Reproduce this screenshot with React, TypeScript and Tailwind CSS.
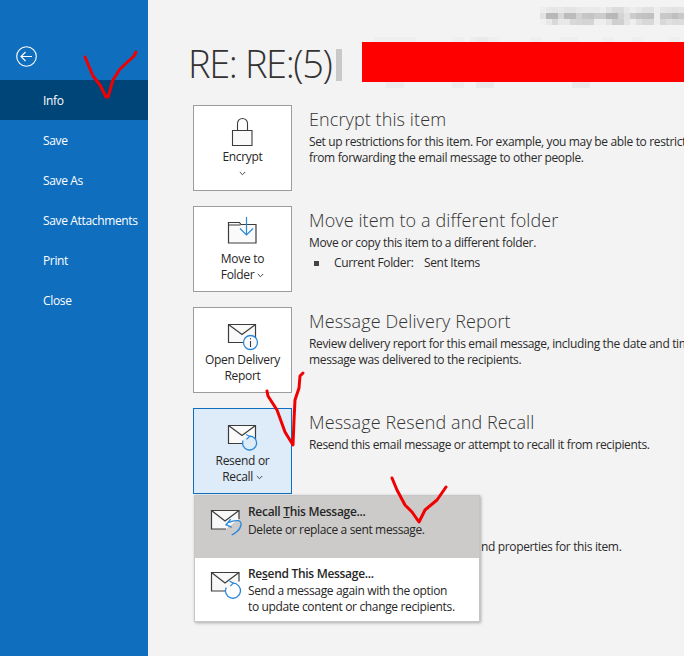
import React from "react";

const font = { fontFamily: '"Open Sans", "Noto Sans", sans-serif' };
const ink = "#3c3c3c";
const blue = "#2b88d8";

function Envelope() {
  return (
    <g fill="#fafafa" stroke={ink} strokeWidth="1.2">
      <path d="M6.5 5.5h27v18h-27z" />
      <path d="M6.5 5.5 20 15.5 33.5 5.5" fill="none" />
    </g>
  );
}

function LockIcon() {
  return (
    <svg width="41" height="32" viewBox="0 0 41 32" fill="none" className="overflow-visible">
      <path d="M15.5 13.5V6.5a5 5 0 0 1 10 0v7" stroke={ink} strokeWidth="1.1" />
      <path d="M10.5 13.5h19.5v15H10.5z" fill="#fafafa" stroke={ink} strokeWidth="1.1" />
    </svg>
  );
}

function FolderIcon() {
  return (
    <svg width="41" height="32" viewBox="0 0 41 32" fill="none" className="overflow-visible">
      <path d="M6.5 4.5h11l1.5 2h15v18.5h-27.5z" fill="#fafafa" stroke={ink} strokeWidth="1.2" />
      <path d="M6.5 7h12" stroke={ink} strokeWidth="1" />
      <path d="M24.5 -1v18M18 10.5l6.5 6.5 6.5-6.5" stroke={blue} strokeWidth="1.2" />
    </svg>
  );
}

function InfoEnvelope() {
  return (
    <svg width="41" height="32" viewBox="0 0 41 32" fill="none" className="overflow-visible">
      <Envelope />
      <circle cx="28.5" cy="23.5" r="7" fill="#fafafa" stroke={blue} strokeWidth="1.3" />
      <path d="M28.5 22v6" stroke={ink} strokeWidth="1.1" />
      <path d="M28.5 19.2v1.2" stroke={ink} strokeWidth="1.1" />
    </svg>
  );
}

function ResendEnvelope() {
  return (
    <svg width="41" height="32" viewBox="0 0 41 32" fill="none" className="overflow-visible">
      <Envelope />
      <circle cx="28" cy="23" r="7" fill="#deebf8" stroke="none" />
      <path d="M27.5 16a7 7 0 1 1-6.4 4.4" stroke={blue} strokeWidth="1.3" />
      <path d="M24 14.5l3.6 1.8-3 3" stroke={blue} strokeWidth="1.2" />
    </svg>
  );
}

function MenuRecallIcon() {
  return (
    <svg width="32" height="30" viewBox="0 0 32 30" fill="none" className="overflow-visible">
      <path d="M15 19H0.5V0.5H28V9" fill="#f8f8f8" stroke={ink} strokeWidth="1.2" />
      <path d="M0.5 0.5 14 11 28 0.5" stroke={ink} strokeWidth="1.2" />
      <path d="M17.300 12.700C21 11 25 10.300 27.300 10.700C29.500 11.200 30.500 13 30 15C29.300 18.500 27.500 20.500 25.700 21.700C24 23.200 22.500 24.200 20.700 25" stroke={blue} strokeWidth="1.3" />
      <path d="M19.700 9.300 15 14.700 20.700 17.300" stroke={blue} strokeWidth="1.3" />
    </svg>
  );
}

function MenuResendIcon() {
  return (
    <svg width="32" height="30" viewBox="0 0 32 30" fill="none" className="overflow-visible">
      <path d="M14 19H0.5V0.5H28V9.500" fill="#f8f8f8" stroke={ink} strokeWidth="1.2" />
      <path d="M0.5 0.5 14 11 28 0.5" stroke={ink} strokeWidth="1.2" />
      <path d="M22 11.200a7.500 7.500 0 1 1-6.800 4.300" stroke={blue} strokeWidth="1.3" />
      <path d="M18.500 9l3.800 2.200-3 3" stroke={blue} strokeWidth="1.2" />
    </svg>
  );
}

function Chevron() {
  return (
    <svg width="7" height="5" viewBox="0 0 7 5" fill="none" className="inline-block">
      <path d="M0.8 1l2.700 2.700L6.200 1" stroke="#444444" strokeWidth="1" />
    </svg>
  );
}

function Card({
  icon,
  lines,
  active,
  tight,
}: {
  icon: React.ReactNode;
  lines: React.ReactNode[];
  active?: boolean;
  tight?: boolean;
}) {
  return (
    <div
      className={
        active
          ? "w-[99px] h-[86px] shrink-0 border border-[#106ebe] bg-[#deebf8] pt-[11px] flex flex-col items-center"
          : "w-[99px] h-[86px] shrink-0 border border-[#9c9c9c] bg-white pt-[11px] flex flex-col items-center"
      }
    >
      {icon}
      <div className={tight ? "" : "pt-[1px]"}>
        {lines.map((line, i) => (
          <div key={i} className="h-[16px] leading-[16px] text-center text-[12px] text-[#262626] whitespace-nowrap tracking-[-0.3px]">
            {line}
          </div>
        ))}
      </div>
    </div>
  );
}

function Section({
  card,
  title,
  children,
}: {
  card: React.ReactNode;
  title: string;
  children: React.ReactNode;
}) {
  return (
    <div className="flex gap-[17px] h-[86px]">
      {card}
      <div className="min-w-0 flex-1 overflow-hidden">
        <div className="mt-[2px] h-[24px] leading-[24px] text-[18px] font-light text-[#333333] whitespace-nowrap tracking-[0.1px]">
          {title}
        </div>
        <div className="mt-[3px] text-[12px] leading-[16px] text-[#2b2b2b] whitespace-nowrap tracking-[-0.35px]">
          {children}
        </div>
      </div>
    </div>
  );
}

function Mosaic({ rows, cell }: { rows: string[][]; cell: number }) {
  return (
    <div className="flex flex-col">
      {rows.map((row, r) => (
        <div key={r} className="flex">
          {row.map((c, i) => (
            <div key={i} style={{ width: cell, height: cell, background: `#${c}${c}${c}` }} />
          ))}
        </div>
      ))}
    </div>
  );
}

const topBlur = [
  "ee e8 e6 e8 e4 e4 e8 ea ea ea ee e4 dc dc e8 ee e8 e2 e2 ee e6 e4 e2 e4".split(" "),
  "e2 b8 b8 d8 bc bc d2 c6 c4 cc cc b8 b8 d4 e2 cc c4 c2 c0 ee c8 c8 bf c8".split(" "),
  "f0 e8 d8 e8 e8 d8 d6 d4 d4 ee ee e4 cf d0 e4 ee e0 d8 d8 ee d8 e0 dc dc".split(" "),
];

const aboveRed = ["f3 f3 f3 ef ef ef ef ef ef ef f3 f3 f3 f3 f3 f3 ef ef f3 ee ea ea ee ef f3 f3 f3 f3 f3 ef ef f3 f3 f3 ef ef ef f3 f3 f3 f3 ef ef f3 f3 f3 ef ef f3 f3 f3 f3 ef ef f3".split(" ")];
const belowRed = ["f3 f3 f3 f3 f3 ec ec ec f3 f3 f3 f3 f3 f3 f3 f3 ec ec f3 f3 e9 e9 e9 f3 f3 f3 f3 f3 f3 f3 f3 f3 f3 f3 f3 f3 e9 e9 e9 f3 f3 f3 f3 f3 f3 f3 f3 f3 f3 f3 f3 f3 f3 f3 f3".split(" ")];

const navItems = ["Info", "Save", "Save As", "Save Attachments", "Print", "Close"];

export default function App() {
  return (
    <div className="relative w-[684px] h-[656px] overflow-hidden flex bg-[#f3f3f3]" style={font}>
      <aside className="w-[148px] shrink-0 bg-[#106ebe] text-white">
        <div className="h-[80px] pt-[46px] pl-[16px]">
          <svg width="21" height="21" viewBox="0 0 21 21" fill="none">
            <circle cx="10.500" cy="10.500" r="9.800" stroke="#ffffff" strokeWidth="1.100" />
            <path d="M16 10.500H5M9.500 6l-4.500 4.500 4.500 4.500" stroke="#ffffff" strokeWidth="1.100" />
          </svg>
        </div>
        {navItems.map((item, i) => (
          <div
            key={item}
            className={
              i === 0
                ? "h-[40px] leading-[42px] pl-[43px] text-[12px] bg-[#004578] tracking-[-0.35px]"
                : "h-[40px] leading-[42px] pl-[43px] text-[12px] tracking-[-0.35px]"
            }
          >
            {item}
          </div>
        ))}
      </aside>

      <main className="relative flex-1 min-w-0 pl-[45px] overflow-hidden">
        <div className="flex justify-end pt-[7px] h-[42px]">
          <Mosaic rows={topBlur} cell={6} />
        </div>
        <div className="flex items-center h-[40px] -ml-[5px]">
          <div className="w-[148px] shrink-0 pt-[2px] text-[38px] leading-[48px] font-light text-[#333333] whitespace-nowrap tracking-[-1.4px]">
            RE: RE:(5)
          </div>
          <div className="w-[6px] h-[32px] mt-[6px] bg-[#c9c9c9]" />
          <div className="ml-[20px] relative h-[40px] flex-1 bg-[#ff0000]">
            <div className="absolute -left-[6px] -top-[5px] h-[5px] overflow-hidden">
              <Mosaic rows={aboveRed} cell={6} />
            </div>
            <div className="absolute -left-[6px] top-[40px] h-[6px] overflow-hidden">
              <Mosaic rows={belowRed} cell={6} />
            </div>
          </div>
        </div>
        <div className="mt-[23px] flex flex-col gap-[15px]">
          <Section
            card={<Card tight icon={<LockIcon />} lines={["Encrypt", <Chevron key="c" />]} />}
            title="Encrypt this item"
          >
            <div>Set up restrictions for this item. For example, you may be able to restrict</div>
            <div>from forwarding the email message to other people.</div>
          </Section>
          <Section
            card={
              <Card
                icon={<FolderIcon />}
                lines={[
                  "Move to",
                  <span key="f">
                    Folder <Chevron />
                  </span>,
                ]}
              />
            }
            title="Move item to a different folder"
          >
            <div>Move or copy this item to a different folder.</div>
            <div className="mt-[4px] flex items-center">
              <span className="ml-[5px] w-[5px] h-[5px] bg-[#444444]" />
              <span className="ml-[15px] w-[90px]">Current Folder:</span>
              <span>Sent Items</span>
            </div>
          </Section>
          <Section
            card={<Card icon={<InfoEnvelope />} lines={["Open Delivery", "Report"]} />}
            title="Message Delivery Report"
          >
            <div>Review delivery report for this email message, including the date and time</div>
            <div>message was delivered to the recipients.</div>
          </Section>
          <Section
            card={
              <Card
                active
                icon={<ResendEnvelope />}
                lines={[
                  "Resend or",
                  <span key="r">
                    Recall <Chevron />
                  </span>,
                ]}
              />
            }
            title="Message Resend and Recall"
          >
            <div>Resend this email message or attempt to recall it from recipients.</div>
          </Section>
          <div className="ml-[288px] pt-[29px] text-[12px] leading-[17px] text-[#2b2b2b] whitespace-nowrap tracking-[-0.35px]">
            nd properties for this item.
          </div>
        </div>
      </main>

      <div className="absolute left-[194px] top-[495px] w-[286px] h-[127px] border border-[#c6c6c6] bg-white shadow-[1px_1px_3px_rgba(0,0,0,0.3)]">
        <div className="h-[62px] bg-[#cdcbc9] flex pl-[16px] pt-[14px]">
          <MenuRecallIcon />
          <div className="ml-[5px] -mt-[7px] text-[12px] text-[#262626] tracking-[-0.35px]">
            <div className="leading-[18px] h-[18px] font-semibold tracking-[-0.3px]">
              Recall <u>T</u>his Message...
            </div>
            <div className="leading-[18px]">Delete or replace a sent message.</div>
          </div>
        </div>
        <div className="h-[63px] flex pl-[16px] pt-[14px]">
          <MenuResendIcon />
          <div className="ml-[5px] -mt-[7px] text-[12px] text-[#262626] tracking-[-0.35px]">
            <div className="leading-[18px] h-[18px] font-semibold tracking-[-0.3px]">
              Re<u>s</u>end This Message...
            </div>
            <div className="leading-[15.500px]">Send a message again with the option</div>
            <div className="leading-[15.500px]">to update content or change recipients.</div>
          </div>
        </div>
      </div>

      <svg
        className="absolute left-0 top-0 pointer-events-none"
        width="684"
        height="656"
        viewBox="0 0 684 656"
        fill="none"
        stroke="#f00000"
        strokeWidth="3"
        strokeLinecap="round"
        strokeLinejoin="round"
      >
        <path d="M85 57 93 76 100 85 106 97 108 97 113 80 120 69 134 56 136 52" />
        <path d="M303 373 300 376 299 388 295 400 294 420 293 445 285 432 277 410 268 396 267 391" />
        <path d="M392 478 397 490 405 505 412 512 419 522 425 510 437 500 446 487" />
      </svg>
    </div>
  );
}
